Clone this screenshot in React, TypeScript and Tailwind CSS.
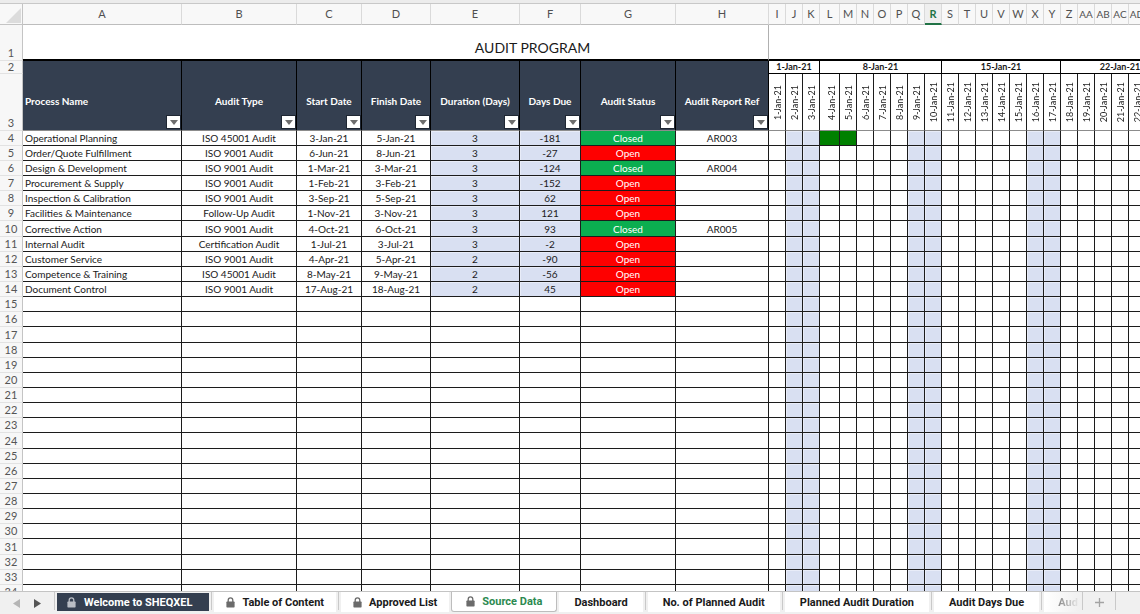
import React from "react";

type Audit = {
  name: string;
  type: string;
  start: string;
  finish: string;
  duration: number;
  due: number;
  status: "Open" | "Closed";
  ref?: string;
};

const audits: Audit[] = [
  { name: "Operational Planning", type: "ISO 45001 Audit", start: "3-Jan-21", finish: "5-Jan-21", duration: 3, due: -181, status: "Closed", ref: "AR003" },
  { name: "Order/Quote Fulfillment", type: "ISO 9001 Audit", start: "6-Jun-21", finish: "8-Jun-21", duration: 3, due: -27, status: "Open" },
  { name: "Design & Development", type: "ISO 9001 Audit", start: "1-Mar-21", finish: "3-Mar-21", duration: 3, due: -124, status: "Closed", ref: "AR004" },
  { name: "Procurement & Supply", type: "ISO 9001 Audit", start: "1-Feb-21", finish: "3-Feb-21", duration: 3, due: -152, status: "Open" },
  { name: "Inspection & Calibration", type: "ISO 9001 Audit", start: "3-Sep-21", finish: "5-Sep-21", duration: 3, due: 62, status: "Open" },
  { name: "Facilities & Maintenance", type: "Follow-Up Audit", start: "1-Nov-21", finish: "3-Nov-21", duration: 3, due: 121, status: "Open" },
  { name: "Corrective Action", type: "ISO 9001 Audit", start: "4-Oct-21", finish: "6-Oct-21", duration: 3, due: 93, status: "Closed", ref: "AR005" },
  { name: "Internal Audit", type: "Certification Audit", start: "1-Jul-21", finish: "3-Jul-21", duration: 3, due: -2, status: "Open" },
  { name: "Customer Service", type: "ISO 9001 Audit", start: "4-Apr-21", finish: "5-Apr-21", duration: 2, due: -90, status: "Open" },
  { name: "Competence & Training", type: "ISO 45001 Audit", start: "8-May-21", finish: "9-May-21", duration: 2, due: -56, status: "Open" },
  { name: "Document Control", type: "ISO 9001 Audit", start: "17-Aug-21", finish: "18-Aug-21", duration: 2, due: 45, status: "Open" },
];

const mainColumns = [
  { letter: "A", label: "Process Name", width: "w-[159px]" },
  { letter: "B", label: "Audit Type", width: "w-[115px]" },
  { letter: "C", label: "Start Date", width: "w-[65px]" },
  { letter: "D", label: "Finish Date", width: "w-[69px]" },
  { letter: "E", label: "Duration (Days)", width: "w-[89px]" },
  { letter: "F", label: "Days Due", width: "w-[61px]" },
  { letter: "G", label: "Audit Status", width: "w-[95px]" },
  { letter: "H", label: "Audit Report Ref", width: "w-[93px]" },
];

const dayLetters = ["I", "J", "K", "L", "M", "N", "O", "P", "Q", "R", "S", "T", "U", "V", "W", "X", "Y", "Z", "AA", "AB", "AC", "AD", "AE", "AF"];
const days = dayLetters.map((letter, i) => ({
  letter,
  label: `${i + 1}-Jan-21`,
  weekend: i % 7 === 1 || i % 7 === 2,
}));

const weeks = [
  { label: "1-Jan-21", span: 3 },
  { label: "8-Jan-21", span: 7 },
  { label: "15-Jan-21", span: 7 },
  { label: "22-Jan-21", span: 7 },
];

const rowNumbers = Array.from({ length: 31 }, (_, i) => i + 4);

const rowHead = "border-r border-b border-r-[#c4c4c4] border-b-[#e2e2e2] bg-[#f7f7f7] text-center align-bottom text-[11px] font-normal text-[#555555]";
const cell = "overflow-hidden border-r border-b border-[#1c1c1c] text-center whitespace-nowrap";
const lavender = "bg-[#d9e0f2] shadow-[inset_1px_1px_0_#e8ecf8]";

function FilterButton({ label }: { label: string }) {
  return (
    <button type="button" aria-label={`Filter ${label}`} className="flex h-[14px] w-[15px] items-center justify-center border border-[#1f2733] bg-white">
      <svg width="8" height="5" viewBox="0 0 8 5" aria-hidden="true">
        <path d="M0 0h8L4 5z" fill="#6e6e6e" />
      </svg>
    </button>
  );
}

function LockIcon({ color }: { color: string }) {
  return (
    <svg width="9" height="11" viewBox="0 0 9 11" aria-hidden="true">
      <path d="M2.2 5V3.2a2.3 2.3 0 0 1 4.6 0V5" fill="none" stroke={color} strokeWidth="1.3" />
      <rect x="0.4" y="4.6" width="8.2" height="5.9" rx="0.7" fill={color} />
    </svg>
  );
}

function BodyRow({ n }: { n: number }) {
  const audit = audits[n - 4];
  const shade = audit ? lavender : "bg-white";
  const statusShade = !audit ? "bg-white" : audit.status === "Open" ? "bg-[#fe0000]" : "bg-[#0bae50]";
  return (
    <tr className={n % 7 === 3 ? "h-[16px]" : "h-[15px]"}>
      <th scope="row" className={rowHead}>{n}</th>
      <td className={`${cell} pl-[2px] text-left`}>{audit?.name}</td>
      <td className={cell}>{audit?.type}</td>
      <td className={cell}>{audit?.start}</td>
      <td className={cell}>{audit?.finish}</td>
      <td className={`${cell} ${shade}`}>{audit?.duration}</td>
      <td className={`${cell} ${shade}`}>{audit?.due}</td>
      <td className={`${cell} ${statusShade} text-white`}>{audit?.status}</td>
      <td className={cell}>{audit?.ref}</td>
      {days.map((d) => {
        const planned = n === 4 && (d.letter === "L" || d.letter === "M");
        return <td key={d.letter} className={`${cell} ${planned ? "bg-[#008000]" : d.weekend ? lavender : "bg-white"}`} />;
      })}
    </tr>
  );
}

const letterCell = "border-r border-b border-r-[#dadada] border-b-[#bdbdbd] text-center align-middle font-normal";

function Sheet() {
  return (
    <table className="w-max table-fixed border-separate border-spacing-0 bg-white text-[10px] leading-[14px] text-[#1a1a1a]">
      <colgroup>
        <col className="w-[23px]" />
        {mainColumns.map((c) => <col key={c.letter} className={c.width} />)}
        {days.map((d) => <col key={d.letter} className={d.letter === "L" ? "w-[20px]" : "w-[17px]"} />)}
      </colgroup>
      <thead>
        <tr className="h-[21px] bg-[#f8f8f8] text-[#505050]">
          <td className="border-r border-b border-[#c4c4c4] p-0 align-bottom">
            <svg width="16" height="16" viewBox="0 0 16 16" className="ml-auto" aria-hidden="true">
              <path d="M15 0v15H0z" fill="#dcdcdc" />
            </svg>
          </td>
          {mainColumns.map((c) => (
            <th key={c.letter} scope="col" className={`${letterCell} text-[11px]`}>{c.letter}</th>
          ))}
          {days.map((d) => (
            <th key={d.letter} scope="col" className={d.letter === "R" ? "border-r border-b-2 border-r-[#dadada] border-b-[#217346] bg-[#efefef] text-center text-[11px] font-bold text-[#217346]" : d.letter.length > 1 ? `${letterCell} text-[10px]` : `${letterCell} text-[11px]`}>
              {d.letter}
            </th>
          ))}
        </tr>
        <tr className="h-[36px]">
          <th scope="row" className={rowHead}>1</th>
          <td colSpan={8} className="border-r border-b-2 border-r-[#b0b0b0] border-b-black pl-[274px] text-center align-bottom text-[14px] leading-[22px] whitespace-nowrap">
            <h1>AUDIT PROGRAM</h1>
          </td>
          <td colSpan={24} className="border-b-2 border-black" />
        </tr>
        <tr className="h-[13px]">
          <th scope="row" className={`${rowHead} leading-[12px]`}>2</th>
          {mainColumns.map((c) => (
            <th key={c.letter} rowSpan={2} scope="col" className="border-r border-b border-r-black border-b-[#8c8c8c] bg-[#343f50] align-bottom font-bold whitespace-nowrap text-white">
              <div className={c.letter === "A" ? "pb-[7px] pl-[2px] text-left" : "pb-[7px] text-center"}>{c.label}</div>
              <div className="flex justify-end pb-px"><FilterButton label={c.label} /></div>
            </th>
          ))}
          {weeks.map((w) => (
            <th key={w.label} colSpan={w.span} scope="colgroup" className="border-r border-b border-black text-center text-[9px] leading-[12px] font-bold">{w.label}</th>
          ))}
        </tr>
        <tr className="h-[57px]">
          <th scope="row" className={rowHead}>3</th>
          {days.map((d) => (
            <th key={d.letter} scope="col" className="border-r border-b border-r-[#1c1c1c] border-b-[#8c8c8c] text-[9px] font-normal whitespace-nowrap">
              <span className="ml-auto block w-[14px] rotate-180 [writing-mode:vertical-rl]">{d.label}</span>
            </th>
          ))}
        </tr>
      </thead>
      <tbody>
        {rowNumbers.map((n) => <BodyRow key={n} n={n} />)}
      </tbody>
    </table>
  );
}

const tab = "flex h-[20px] shrink-0 items-center gap-[7px] bg-white text-[#1a1a1a]";

function Divider() {
  return <span className="h-[18px] w-px shrink-0 bg-[#c9c9c9]" />;
}

function SheetTabs() {
  return (
    <nav aria-label="Sheets" className="flex h-[23px] shrink-0 items-start gap-[2px] overflow-hidden border-t border-[#c4c4c4] bg-[#f0f0f0] font-[Roboto,'Liberation_Sans',sans-serif] text-[11px] leading-[19px] font-bold whitespace-nowrap">
      <button type="button" aria-label="Previous sheet" className="flex h-[22px] w-[24px] shrink-0 items-center justify-end pr-[4px]">
        <svg width="7" height="9" viewBox="0 0 7 9" aria-hidden="true"><path d="M7 0v9L0 4.500z" fill="#b5b5b5" /></svg>
      </button>
      <button type="button" aria-label="Next sheet" className="flex h-[22px] w-[26px] shrink-0 items-center pl-[8px]">
        <svg width="7" height="9" viewBox="0 0 7 9" aria-hidden="true"><path d="M0 0v9l7-4.500z" fill="#555555" /></svg>
      </button>
      <Divider />
      <button type="button" className="mt-px flex h-[18px] shrink-0 items-center gap-[8px] bg-[#343f50] pr-[17px] pl-[10px] text-white">
        <LockIcon color="#b9bdc4" />Welcome to SHEQXEL
      </button>
      <Divider />
      <button type="button" className={`${tab} px-[12px]`}><LockIcon color="#6b6b6b" />Table of Content</button>
      <Divider />
      <button type="button" className={`${tab} px-[12px]`}><LockIcon color="#6b6b6b" />Approved List</button>
      <button type="button" aria-current="page" className="flex h-[20px] shrink-0 items-center gap-[7px] rounded-b-[3px] border-x border-b border-[#bdbdbd] bg-white px-[14px] text-[#2c8a50]">
        <LockIcon color="#6b6b6b" />Source Data
      </button>
      <button type="button" className={`${tab} px-[15px]`}>Dashboard</button>
      <Divider />
      <button type="button" className={`${tab} px-[15px]`}>No. of Planned Audit</button>
      <Divider />
      <button type="button" className={`${tab} px-[15px]`}>Planned Audit Duration</button>
      <Divider />
      <button type="button" className={`${tab} px-[15px]`}>Audit Days Due</button>
      <Divider />
      <button type="button" className="h-[20px] w-[36px] shrink-0 overflow-hidden bg-linear-to-r from-white to-[#f0f0f0] pl-[14px] text-left">
        <span className="bg-linear-to-r from-[#8a8a8a] to-[#e6e6e6] bg-clip-text text-transparent">Aud</span>
      </button>
      <Divider />
      <button type="button" aria-label="Add sheet" className="flex h-[20px] w-[28px] shrink-0 items-center justify-center">
        <svg width="9" height="9" viewBox="0 0 9 9" aria-hidden="true"><path d="M4.500 0v9M0 4.500h9" stroke="#a3a3a3" strokeWidth="1.300" /></svg>
      </button>
      <Divider />
    </nav>
  );
}

export default function App() {
  return (
    <div className="flex h-screen flex-col overflow-hidden bg-white font-['Lato','Noto_Sans',sans-serif]">
      <div className="h-[4px] shrink-0 border-b border-[#c8c8c8] bg-[#ececec]" />
      <main className="min-h-0 flex-1 overflow-hidden">
        <Sheet />
      </main>
      <SheetTabs />
    </div>
  );
}
